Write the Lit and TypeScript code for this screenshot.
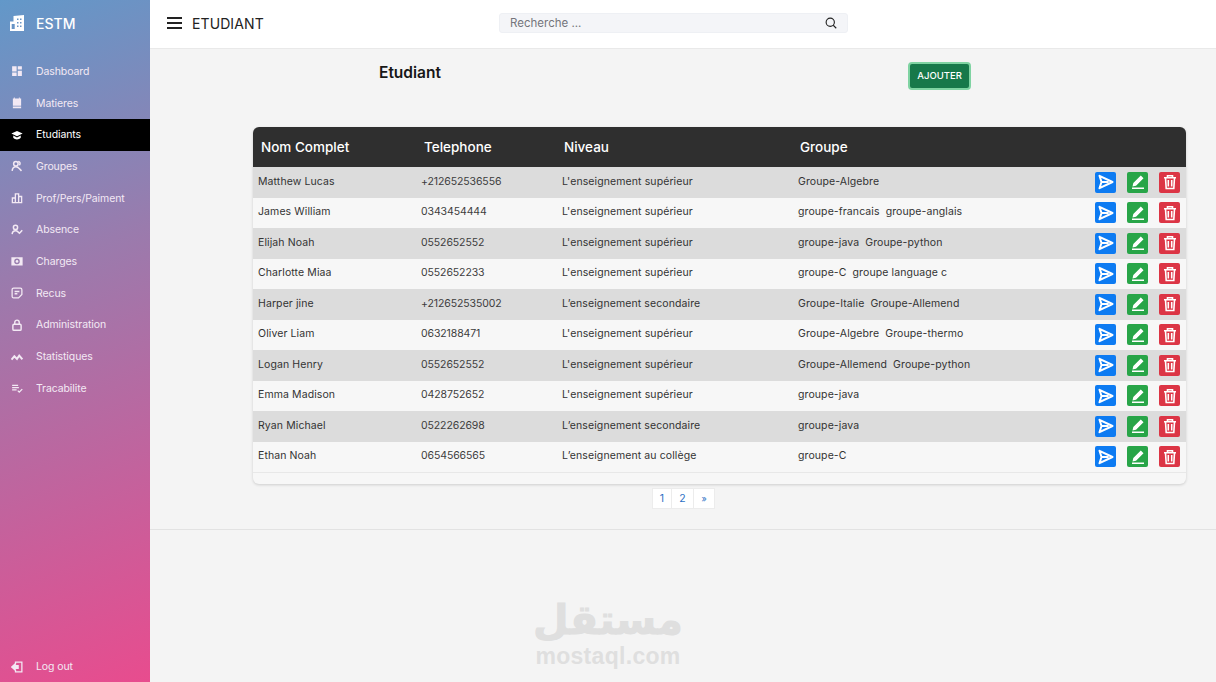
import { LitElement, html, css, svg } from "lit";
import { customElement } from "lit/decorators.js";

const navIcons: Record<string, any> = {
  dashboard: svg`<path fill="currentColor" d="M1.500 1.500h6v7h-6zM9 1.500h5.500v4.500H9zM1.500 10h6v4.500h-6zM9 7.500h5.500v7H9z"/>`,
  book: svg`<path fill="currentColor" d="M2.500 2h1.300V.8H5V2h5.500V.8h1.200V2h1.800v9.500h-11zM2.500 12.700h11V15h-11z"/>`,
  cap: svg`<path fill="currentColor" d="M8 2.500 15.500 6 8 9.500.5 6zM3 8.800l5 2.400 5-2.400v3C11.700 13.200 9.900 14 8 14s-3.700-.8-5-2.200z"/>`,
  group: svg`<g fill="none" stroke="currentColor" stroke-width="2"><circle cx="6.500" cy="5" r="3"/><path d="M1.500 14.500c.4-3.500 2.400-5.500 5-5.500 1.800 0 3.500 1 4.500 2.500l3 3M9.500 2c2.500.2 3.500 3 1.700 5"/></g>`,
  chart: svg`<g fill="none" stroke="currentColor" stroke-width="1.700"><path d="M1.800 14.200V8h4v6.200zM5.800 14.200V2.500h4.400v11.700zM10.200 14.200V6h4v8.200z"/></g>`,
  absence: svg`<g fill="none" stroke="currentColor" stroke-width="2"><circle cx="6" cy="4.500" r="2.800"/><path d="M1.500 13.500c.3-3 1.800-4.500 4.500-4.500 1.500 0 2.500.5 3.300 1.500l2 1.800 3.700-4"/></g>`,
  charges: svg`<path fill="currentColor" fill-rule="evenodd" d="M.5 3h15v11H.5zM8 4.800a3.700 3.700 0 1 0 0 7.400 3.700 3.700 0 0 0 0-7.400z"/><circle cx="8" cy="8.500" r="1.800" fill="currentColor"/>`,
  recus: svg`<g fill="none" stroke="currentColor" stroke-width="1.700"><path d="M3.500 1.500h9a2 2 0 0 1 2 2v6.500l-4.500 4.500H3.500a2 2 0 0 1-2-2v-9a2 2 0 0 1 2-2zM4.800 6h6.400M4.800 9h3.700"/></g>`,
  lock: svg`<g fill="none" stroke="currentColor" stroke-width="1.900"><rect x="2.500" y="7" width="11" height="8" rx="1.500"/><path d="M5 7V4.500a3 3 0 0 1 6 0V7"/></g>`,
  stats: svg`<path fill="none" stroke="currentColor" stroke-width="2.600" d="M.8 11.500 4.500 7l3.500 3.500L11 6l4.200 5"/>`,
  trace: svg`<path fill="none" stroke="currentColor" stroke-width="1.800" d="M1.500 4.500h8M1.500 7.500h9M1.500 10.500h6M9 11.500l2 2 4-4"/>`,
  logout: svg`<g fill="none" stroke="currentColor" stroke-width="1.700"><path d="M6 4.500V1.500h8.500v13H6v-3"/><path fill="currentColor" d="M1 8 5.500 3.800V6.300h4v3.400h-4v2.500z"/></g>`,
};

const nav = [
  ["Dashboard", "dashboard"],
  ["Matieres", "book"],
  ["Etudiants", "cap"],
  ["Groupes", "group"],
  ["Prof/Pers/Paiment", "chart"],
  ["Absence", "absence"],
  ["Charges", "charges"],
  ["Recus", "recus"],
  ["Administration", "lock"],
  ["Statistiques", "stats"],
  ["Tracabilite", "trace"],
];

const SUP = "L'enseignement supérieur";
const SEC = "L’enseignement secondaire";
const rows: [string, string, string, string[]][] = [
  ["Matthew Lucas", "+212652536556", SUP, ["Groupe-Algebre"]],
  ["James William", "0343454444", SUP, ["groupe-francais", "groupe-anglais"]],
  ["Elijah Noah", "0552652552", SUP, ["groupe-java", "Groupe-python"]],
  ["Charlotte Miaa", "0552652233", SUP, ["groupe-C", "groupe language c"]],
  ["Harper jine", "+212652535002", SEC, ["Groupe-Italie", "Groupe-Allemend"]],
  ["Oliver Liam", "0632188471", SUP, ["Groupe-Algebre", "Groupe-thermo"]],
  ["Logan Henry", "0552652552", SUP, ["Groupe-Allemend", "Groupe-python"]],
  ["Emma Madison", "0428752652", SUP, ["groupe-java"]],
  ["Ryan Michael", "0522262698", SEC, ["groupe-java"]],
  ["Ethan Noah", "0654566565", "L’enseignement au collège", ["groupe-C"]],
];

@customElement("app-root")
export class AppRoot extends LitElement {
  static styles = css`
    :host { display: block; width: 1216px; height: 682px; overflow: hidden; font-family: Inter, "Noto Sans", sans-serif; background: #f4f4f4; }
    * { box-sizing: border-box; }
    .shell { display: flex; height: 682px; }
    .side { width: 150px; flex: none; display: flex; flex-direction: column; color: #fff; background: linear-gradient(160deg, #6298c9 0%, #9a7bad 38%, #e84c8e 100%); }
    .brand { height: 46px; display: flex; align-items: center; gap: 11px; padding-left: 10px; font-size: 14px; font-weight: 500; }
    .brand svg { width: 15px; height: 16px; flex: none; }
    .nav { margin-top: 9.500px; display: flex; flex-direction: column; flex: 1; }
    .item { height: 31.700px; display: flex; align-items: center; gap: 13.500px; padding-left: 10.500px; font-size: 10.500px; letter-spacing: -.1px; color: #f3e9f4; }
    .item svg { width: 12px; height: 12px; flex: none; }
    .item.on { background: #000; color: #fff; }
    .logout { height: 31px; }
    .spacer { flex: 1; }
    .main { flex: 1; display: flex; flex-direction: column; min-width: 0; }
    .top { height: 49px; background: #fff; border-bottom: 1px solid #e9e9e9; display: flex; align-items: center; padding: 0 0 2px 17px; flex: none; }
    .burger { width: 15px; height: 12px; display: flex; flex-direction: column; justify-content: space-between; margin-right: 10px; }
    .burger i { height: 2px; background: #222; display: block; }
    .top h1 { width: 307px; margin: 0; font-size: 14px; font-weight: 400; color: #222; letter-spacing: .1px; }
    .search { width: 349px; height: 20px; margin-bottom: 1px; background: #f4f5f8; border-radius: 3px; border: 1px solid #eef0f4; display: flex; align-items: center; justify-content: space-between; padding: 0 10px; font-size: 11.500px; color: #75757c; }
    .search svg { width: 12px; height: 12px; }
    .head { display: flex; align-items: flex-start; height: 78px; flex: none; }
    .head h2 { margin: 14px 0 0 229px; width: 529px; font-size: 15.500px; line-height: 20px; font-weight: 600; color: #171717; }
    .add { margin-top: 12.500px; width: 63px; height: 28.500px; display: flex; align-items: center; justify-content: center; background: #17784a; color: #fff; font-size: 9.500px; font-weight: 500; border-radius: 4px; border: 2px solid #7fd3a2; }
    .card { margin-left: 103px; width: 933px; height: 357px; border-radius: 6px; background: #f7f7f7; box-shadow: 0 1px 3px rgba(0,0,0,.16); flex: none; overflow: hidden; }
    table { border-collapse: collapse; width: 100%; table-layout: fixed; }
    th { background: #2f2f2f; height: 40px; color: #fff; text-align: left; font-size: 13.500px; font-weight: 500; padding: 0 0 0 8px; }
    th:nth-child(n+3) { padding-left: 7px; }
    td { height: 30.500px; font-size: 10.500px; letter-spacing: .1px; color: #333; padding: 0 0 2px 5px; white-space: nowrap; }
    td.num { letter-spacing: -.1px; color: #3d3d3d; }
    td.a { padding-bottom: 0; }
    tr:nth-child(odd) td { background: #dcdcdc; }
    tr:nth-child(even) td { background: #f7f7f7; }
    tbody tr:last-child td { border-bottom: 1px solid #e8e8e8; }
    .g { margin-right: 6px; }
    .acts { display: flex; justify-content: flex-end; gap: 11px; padding-right: 6px; }
    .btn { width: 21px; height: 21px; border-radius: 2px; display: flex; align-items: center; justify-content: center; color: #fff; }
    .btn svg { width: 16px; height: 16px; }
    .blue { background: #0d7bf2; }
    .green { background: #28a548; }
    .red { background: #dc3545; }
    .pages { display: flex; justify-content: center; margin: 4px 0 0 2px; height: 21px; flex: none; }
    .pages span { background: #fff; border: 1px solid #ececec; margin-left: -1px; display: flex; align-items: center; justify-content: center; color: #2d6fc4; font-size: 10.500px; height: 21px; }
    .rule { margin-top: 20px; height: 1px; background: #e2e2e2; flex: none; }
    .wm { margin: 66px 0 0 385px; width: 146px; display: flex; flex-direction: column; align-items: center; color: #dfdfdf; flex: none; }
    .wm .ar { font-family: "DejaVu Sans", sans-serif; font-weight: 700; font-size: 41px; line-height: 48px; height: 48px; white-space: nowrap; -webkit-text-stroke: 1px #dfdfdf; }
    .wm .la { font-family: "Liberation Sans", sans-serif; font-weight: 700; font-size: 23px; line-height: 24px; letter-spacing: .3px; white-space: nowrap; }
  `;

  render() {
    return html`<div class="shell">
      <aside class="side">
        <div class="brand">
          <svg viewBox="0 0 15 16"><path fill="#fff" fill-rule="evenodd" d="M0 6.500h3.500V1L14 0v16H0zM1.700 9v5h3V9zM7 3.500V5h1.500V3.500zM10 3.500V5h1.500V3.500zM7 7v1.500h1.500V7zM10 7v1.500h1.500V7zM7 10.500V12h1.500v-1.500zM10 10.500V12h1.500v-1.500z"/></svg>
          <span>ESTM</span>
        </div>
        <nav class="nav">
          ${nav.map(([t, i]) => html`<div class="item ${t === "Etudiants" ? "on" : ""}"><svg viewBox="0 0 16 16">${navIcons[i]}</svg><span>${t}</span></div>`)}
          <div class="spacer"></div>
          <div class="item logout"><svg viewBox="0 0 16 16">${navIcons.logout}</svg><span>Log out</span></div>
        </nav>
      </aside>
      <main class="main">
        <header class="top">
          <div class="burger"><i></i><i></i><i></i></div>
          <h1>ETUDIANT</h1>
          <div class="search"><span>Recherche ...</span>
            <svg viewBox="0 0 16 16"><g fill="none" stroke="#222" stroke-width="1.500"><circle cx="7" cy="7" r="5.500"/><path d="m11 11 4 4"/></g></svg>
          </div>
        </header>
        <div class="head"><h2>Etudiant</h2><div class="add">AJOUTER</div></div>
        <div class="card">
          <table>
            <colgroup><col style="width:163px"/><col style="width:141px"/><col style="width:236px"/><col style="width:283px"/><col/></colgroup>
            <thead><tr><th>Nom Complet</th><th>Telephone</th><th>Niveau</th><th>Groupe</th><th></th></tr></thead>
            <tbody>
              ${rows.map(r => html`<tr>
                <td>${r[0]}</td><td class="num">${r[1]}</td><td>${r[2]}</td>
                <td>${r[3].map(g => html`<span class="g">${g}</span>`)}</td>
                <td class="a"><div class="acts">
                  <div class="btn blue"><svg viewBox="0 0 16 16"><path fill="none" stroke="#fff" stroke-width="2" stroke-linejoin="round" d="M1.500 1.800 14.500 8l-13 6.200L3.500 8zM3.500 8h7"/></svg></div>
                  <div class="btn green"><svg viewBox="0 0 16 16"><path fill="#fff" d="M10.800 1.500l2.700 2.700-7.500 7.500-3.500.8.800-3.500zM2 13.500h12V15H2z"/></svg></div>
                  <div class="btn red"><svg viewBox="0 0 16 16"><path fill="none" stroke="#fff" stroke-width="1.600" d="M2 3.800h12M5.500 3.800V1.800h5v2M3.500 3.800l.7 10.700h7.600l.7-10.700M6.300 6v6.500M9.700 6v6.500"/></svg></div>
                </div></td>
              </tr>`)}
            </tbody>
          </table>
        </div>
        <div class="pages"><span style="width:20px">1</span><span style="width:23px">2</span><span style="width:22px;font-size:9px">»</span></div>
        <div class="rule"></div>
        <div class="wm"><div class="ar">مستقل</div><div class="la">mostaql.com</div></div>
      </main>
    </div>`;
  }
}
